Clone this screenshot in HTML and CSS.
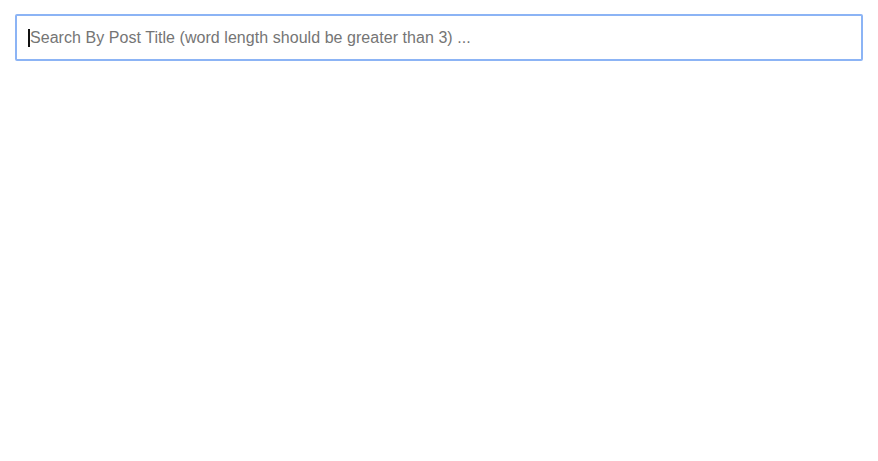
FILE: index.html
```html
<!DOCTYPE html>
<html>
<head>
<meta charset="utf-8">
<link rel="stylesheet" href="styles.css">
</head>
<body>
<div class="page">
  <div class="search">
    <span class="caret"></span><span class="placeholder">Search By Post Title (word length should be greater than 3) ...</span>
  </div>
</div>
</body>
</html>
```

FILE: styles.css
```css
html, body {
  margin: 0;
  padding: 0;
  background: #ffffff;
}
.page {
  padding: 14px 15px;
}
.search {
  box-sizing: border-box;
  width: 848px;
  height: 47px;
  border: 2px solid #8cb4f5;
  border-radius: 2px;
  display: flex;
  align-items: center;
  padding-left: 11px;
  font-family: "Liberation Sans", Arial, sans-serif;
  font-size: 16px;
  letter-spacing: 0.05px;
  color: #757575;
}
.caret {
  display: inline-block;
  width: 2px;
  height: 18px;
  background: #111;
}
.placeholder {
  white-space: nowrap;
}
```
